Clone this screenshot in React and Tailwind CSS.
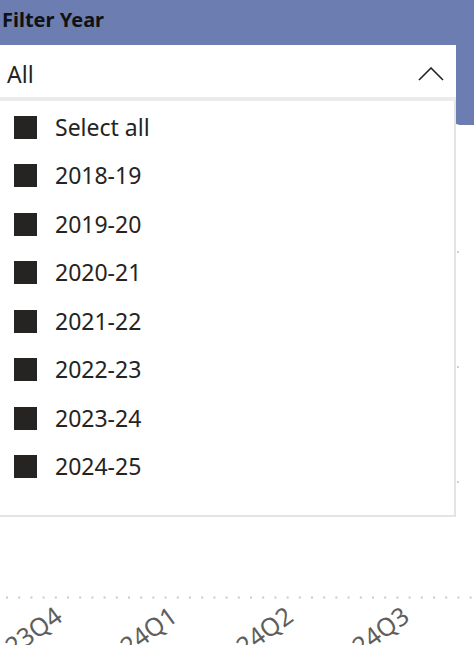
import React from "react";

const years = ["Select all", "2018-19", "2019-20", "2020-21", "2021-22", "2022-23", "2023-24", "2024-25"];
const quarters = [
  { label: "2023Q4", left: 51 },
  { label: "2024Q1", left: 166 },
  { label: "2024Q2", left: 282 },
  { label: "2024Q3", left: 398 },
];

export default function App() {
  return (
    <div className="relative w-[474px] h-[645px] overflow-hidden bg-white font-['Noto_Sans',sans-serif] text-[#252423]">
      {/* chart behind the slicer */}
      <svg className="absolute left-0 top-[596px]" width="474" height="3">
        <line x1="6" y1="1.5" x2="474" y2="1.5" stroke="#c9c9c9" strokeWidth="2" strokeDasharray="2 10.2" />
      </svg>
      {quarters.map((q) => (
        <span
          key={q.label}
          className="absolute top-[602px] text-[25px] leading-none text-[#605e5c] origin-top-right -rotate-[36deg] whitespace-nowrap"
          style={{ right: 474 - q.left }}
        >
          {q.label}
        </span>
      ))}
      <div className="absolute left-[457px] top-[251px] w-[2px] h-[2px] bg-[#d0d0d0]" />
      <div className="absolute left-[457px] top-[366px] w-[2px] h-[2px] bg-[#d0d0d0]" />
      <div className="absolute left-[457px] top-[481px] w-[2px] h-[2px] bg-[#d0d0d0]" />

      {/* slicer header */}
      <div className="absolute left-0 top-0 w-full h-[45px] bg-[#6b7db1]" />
      <div className="absolute right-0 top-0 w-[20px] h-[125px] bg-[#6b7db1] rounded-bl-[6px]" />
      <div className="absolute left-0 top-0 h-[40px] flex items-center pl-[2px]">
        <span className="text-[20px] font-bold text-[#111] leading-none">Filter Year</span>
      </div>

      {/* dropdown */}
      <div className="absolute left-0 top-[45px] w-[456px] flex flex-col">
        <div className="h-[52px] bg-white flex items-center justify-between pl-[7px] pr-[12px] pt-[6px]">
          <span className="text-[23px] leading-none">All</span>
          <svg width="26" height="14" viewBox="0 0 26 14" fill="none" stroke="#252423" strokeWidth="1.6">
            <path d="M1 13 L13 1 L25 13" />
          </svg>
        </div>
        <div className="h-[4px] bg-[#ebebeb]" />
        <div className="bg-white border-r-2 border-b-2 border-[#e4e4e4] pt-[2px] pb-[24px] flex flex-col">
          {years.map((y) => (
            <div key={y} className="h-[48.5px] flex items-center gap-[18px] pl-[14px]">
              <div className="w-[23px] h-[23px] bg-[#252423]" />
              <span className="text-[23px] leading-none">{y}</span>
            </div>
          ))}
        </div>
      </div>
    </div>
  );
}
